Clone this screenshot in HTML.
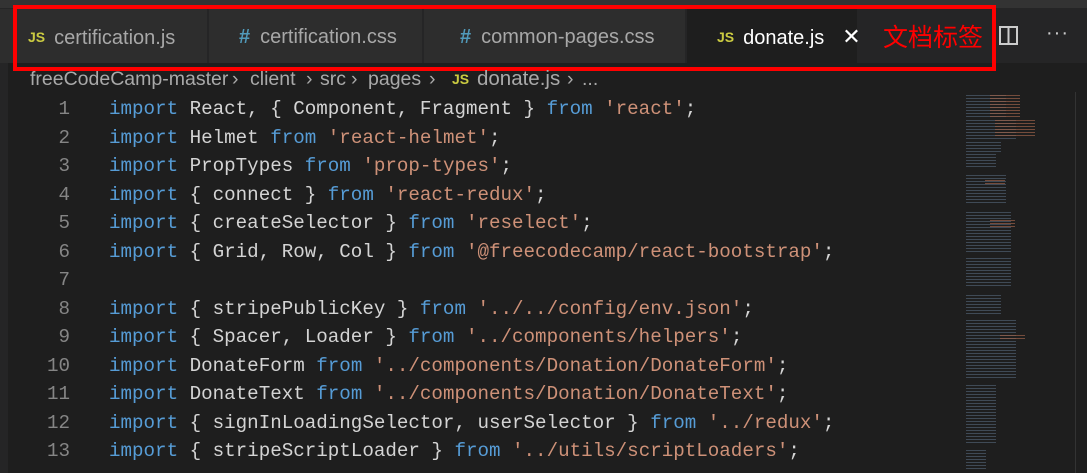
<!DOCTYPE html>
<html><head><meta charset="utf-8"><style>
*{margin:0;padding:0;box-sizing:border-box}
body{width:1087px;height:473px;background:#1e1e1e;overflow:hidden;position:relative;font-family:"Liberation Sans","Noto Sans CJK SC",sans-serif}
.top{position:absolute;left:0;top:0;width:1087px;height:63px;background:#252526}
.topbar{position:absolute;left:0;top:0;width:1087px;height:8px;background:#333}
.tab{position:absolute;top:9px;height:54px;background:#2d2d2d;border-right:1px solid #252526;color:#a8a8a8;font-size:20px;line-height:56px;white-space:nowrap}
.tab.active{background:#1e1e1e;color:#fff}
.js{color:#cbcb41;font-weight:bold;font-size:14px;margin-right:9px;vertical-align:2px}
.hash{color:#519aba;font-weight:bold;font-size:20px;margin-right:10px}
.red{position:absolute;left:13px;top:5px;width:983px;height:66px;border:4px solid #f00}
.c{position:absolute;top:66px;font-size:19.5px;color:#a9a9a9;white-space:nowrap;line-height:26px}
.code{position:absolute;left:0;top:95px;font-family:"Liberation Mono",monospace;font-size:19.2px;line-height:28.5px;color:#d4d4d4;white-space:pre}
.ln{display:inline-block;width:70px;text-align:right;color:#858585;margin-right:39px}
.k{color:#569cd6}.s{color:#ce9178}
.left{position:absolute;left:0;top:63px;width:8px;height:410px;background:#252526}
.mm{position:absolute;background:repeating-linear-gradient(#5a6e84 0 1px,transparent 1px 3px);opacity:.55}
.mo{position:absolute;background:repeating-linear-gradient(#9a6048 0 1px,transparent 1px 3px);opacity:.7}
</style></head><body>
<div class="top"></div><div class="topbar"></div>
<div class="tab" style="left:0;width:208px;padding-left:28px"><span class="js">JS</span>certification.js</div>
<div class="tab" style="left:209px;width:214px;padding-left:30px"><span class="hash">#</span>certification.css</div>
<div class="tab" style="left:424px;width:262px;padding-left:36px"><span class="hash">#</span>common-pages.css</div>
<div class="tab active" style="left:687px;width:171px;padding-left:30px"><span class="js">JS</span>donate.js<span style="margin-left:18px;font-size:22px">✕</span></div>
<div style="position:absolute;left:883px;top:18px;color:#f00;font-size:25px;line-height:36px;font-family:'Noto Sans CJK SC',sans-serif">文档标签</div>
<svg style="position:absolute;left:998px;top:25px" width="22" height="22"><rect x="2" y="2" width="17" height="17" fill="none" stroke="#ccc" stroke-width="2"/><line x1="10.5" y1="2" x2="10.5" y2="19" stroke="#ccc" stroke-width="2"/></svg>
<div style="position:absolute;left:1046px;top:22px;color:#ccc;font-size:20px;letter-spacing:1px">···</div>
<div class="red"></div>
<div class="left"></div>
<div class="c" style="left:30px">freeCodeCamp-master</div>
<div class="c" style="left:232px">›</div>
<div class="c" style="left:250px">client</div>
<div class="c" style="left:306px">›</div>
<div class="c" style="left:320px">src</div>
<div class="c" style="left:351px">›</div>
<div class="c" style="left:368px">pages</div>
<div class="c" style="left:429px">›</div>
<div class="c" style="left:452px;color:#cbcb41;font-weight:bold;font-size:14px">JS</div>
<div class="c" style="left:477px;font-size:20.5px">donate.js</div>
<div class="c" style="left:567px">›</div>
<div class="c" style="left:582px">...</div>
<div class="code"><span class="ln">1</span><span class="k">import</span> React, { Component, Fragment } <span class="k">from</span> <span class="s">'react'</span>;
<span class="ln">2</span><span class="k">import</span> Helmet <span class="k">from</span> <span class="s">'react-helmet'</span>;
<span class="ln">3</span><span class="k">import</span> PropTypes <span class="k">from</span> <span class="s">'prop-types'</span>;
<span class="ln">4</span><span class="k">import</span> { connect } <span class="k">from</span> <span class="s">'react-redux'</span>;
<span class="ln">5</span><span class="k">import</span> { createSelector } <span class="k">from</span> <span class="s">'reselect'</span>;
<span class="ln">6</span><span class="k">import</span> { Grid, Row, Col } <span class="k">from</span> <span class="s">'@freecodecamp/react-bootstrap'</span>;
<span class="ln">7</span>
<span class="ln">8</span><span class="k">import</span> { stripePublicKey } <span class="k">from</span> <span class="s">'../../config/env.json'</span>;
<span class="ln">9</span><span class="k">import</span> { Spacer, Loader } <span class="k">from</span> <span class="s">'../components/helpers'</span>;
<span class="ln">10</span><span class="k">import</span> DonateForm <span class="k">from</span> <span class="s">'../components/Donation/DonateForm'</span>;
<span class="ln">11</span><span class="k">import</span> DonateText <span class="k">from</span> <span class="s">'../components/Donation/DonateText'</span>;
<span class="ln">12</span><span class="k">import</span> { signInLoadingSelector, userSelector } <span class="k">from</span> <span class="s">'../redux'</span>;
<span class="ln">13</span><span class="k">import</span> { stripeScriptLoader } <span class="k">from</span> <span class="s">'../utils/scriptLoaders'</span>;</div>
<div class="mm" style="left:966px;top:95px;width:40px;height:22px"></div>
<div class="mo" style="left:990px;top:95px;width:30px;height:22px"></div>
<div class="mm" style="left:966px;top:120px;width:50px;height:20px"></div>
<div class="mo" style="left:995px;top:120px;width:40px;height:18px"></div>
<div class="mm" style="left:966px;top:142px;width:35px;height:10px"></div>
<div class="mm" style="left:966px;top:154px;width:30px;height:15px"></div>
<div class="mm" style="left:966px;top:175px;width:40px;height:30px"></div>
<div class="mo" style="left:985px;top:180px;width:20px;height:6px"></div>
<div class="mm" style="left:966px;top:212px;width:45px;height:40px"></div>
<div class="mo" style="left:990px;top:220px;width:25px;height:9px"></div>
<div class="mm" style="left:966px;top:258px;width:45px;height:30px"></div>
<div class="mm" style="left:966px;top:295px;width:35px;height:20px"></div>
<div class="mm" style="left:966px;top:320px;width:50px;height:60px"></div>
<div class="mo" style="left:1000px;top:335px;width:25px;height:6px"></div>
<div class="mm" style="left:966px;top:385px;width:30px;height:60px"></div>
<div class="mm" style="left:966px;top:450px;width:20px;height:20px"></div>
<div style="position:absolute;left:1075px;top:92px;width:1px;height:381px;background:#333"></div>
</body></html>
